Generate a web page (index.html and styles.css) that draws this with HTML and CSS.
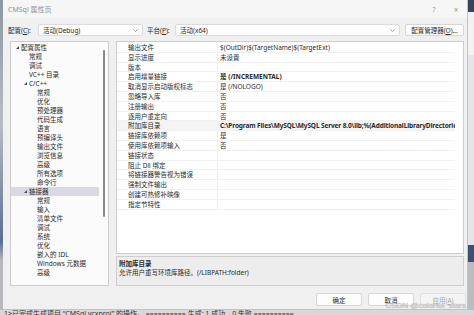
FILE: index.html
```html
<!DOCTYPE html>
<html>
<head>
  <meta charset="UTF-8" />
  <title>CMSql 属性页</title>
<link rel="stylesheet" href="styles.css">
</head>
<body>

<div class="screen">
  <div class="desk">
    <div class="edge-left"></div>

    <div class="dialog">
      <div class="titlebar">
        <span class="title">CMSql 属性页</span>
        <span class="ctl help">?</span>
        <span class="ctl close">×</span>
      </div>

      <div class="toolbar">
        <span class="label cfg-label">配置(<u>C</u>):</span>
        <div class="select cfg">
          <span>活动(Debug)</span>
          <svg class="chev" width="5" height="3" viewBox="0 0 5 3"><path d="M0.5 0.5 L2.5 2.5 L4.5 0.5" fill="none" stroke="#777" stroke-width="0.7"/></svg>
        </div>
        <span class="label plat-label">平台(<u>P</u>):</span>
        <div class="select plat">
          <span>活动(x64)</span>
          <svg class="chev" width="5" height="3" viewBox="0 0 5 3"><path d="M0.5 0.5 L2.5 2.5 L4.5 0.5" fill="none" stroke="#777" stroke-width="0.7"/></svg>
        </div>
        <button class="btn mgr">配置管理器(<u>O</u>)...</button>
      </div>

      <div class="main">
        <div class="tree">
          <ul class="tree-list">
            <li class="lv0 open"><span class="twisty"></span>配置属性</li>
            <li class="lv1"><span class="twisty"></span>常规</li>
            <li class="lv1"><span class="twisty"></span>调试</li>
            <li class="lv1"><span class="twisty"></span>VC++ 目录</li>
            <li class="lv1 open"><span class="twisty"></span>C/C++</li>
            <li class="lv2"><span class="twisty"></span>常规</li>
            <li class="lv2"><span class="twisty"></span>优化</li>
            <li class="lv2"><span class="twisty"></span>预处理器</li>
            <li class="lv2"><span class="twisty"></span>代码生成</li>
            <li class="lv2"><span class="twisty"></span>语言</li>
            <li class="lv2"><span class="twisty"></span>预编译头</li>
            <li class="lv2"><span class="twisty"></span>输出文件</li>
            <li class="lv2"><span class="twisty"></span>浏览信息</li>
            <li class="lv2"><span class="twisty"></span>高级</li>
            <li class="lv2"><span class="twisty"></span>所有选项</li>
            <li class="lv2"><span class="twisty"></span>命令行</li>
            <li class="lv1 open selected"><span class="twisty"></span>链接器</li>
            <li class="lv2"><span class="twisty"></span>常规</li>
            <li class="lv2"><span class="twisty"></span>输入</li>
            <li class="lv2"><span class="twisty"></span>清单文件</li>
            <li class="lv2"><span class="twisty"></span>调试</li>
            <li class="lv2"><span class="twisty"></span>系统</li>
            <li class="lv2"><span class="twisty"></span>优化</li>
            <li class="lv2"><span class="twisty"></span>嵌入的 IDL</li>
            <li class="lv2"><span class="twisty"></span>Windows 元数据</li>
            <li class="lv2"><span class="twisty"></span>高级</li>
          </ul>
          <div class="vscroll"><div class="thumb"></div></div>
        </div>

        <div class="right">
          <div class="grid">
            <div class="rows">
              <div class="row"><span class="name">输出文件</span><span class="value">$(OutDir)$(TargetName)$(TargetExt)</span></div>
              <div class="row"><span class="name">显示进度</span><span class="value">未设置</span></div>
              <div class="row"><span class="name">版本</span><span class="value"></span></div>
              <div class="row"><span class="name">启用增量链接</span><span class="value bold">是 (/INCREMENTAL)</span></div>
              <div class="row"><span class="name">取消显示启动版权标志</span><span class="value">是 (/NOLOGO)</span></div>
              <div class="row"><span class="name">忽略导入库</span><span class="value">否</span></div>
              <div class="row"><span class="name">注册输出</span><span class="value">否</span></div>
              <div class="row"><span class="name">逐用户重定向</span><span class="value">否</span></div>
              <div class="row current"><span class="name">附加库目录</span><span class="value bold tight">C:\Program Files\MySQL\MySQL Server 8.0\lib;%(AdditionalLibraryDirectories)</span></div>
              <div class="row"><span class="name">链接库依赖项</span><span class="value">是</span></div>
              <div class="row"><span class="name">使用库依赖项输入</span><span class="value">否</span></div>
              <div class="row"><span class="name">链接状态</span><span class="value"></span></div>
              <div class="row"><span class="name">阻止 Dll 绑定</span><span class="value"></span></div>
              <div class="row"><span class="name">将链接器警告视为错误</span><span class="value"></span></div>
              <div class="row"><span class="name">强制文件输出</span><span class="value"></span></div>
              <div class="row"><span class="name">创建可热修补映像</span><span class="value"></span></div>
              <div class="row"><span class="name">指定节特性</span><span class="value"></span></div>
            </div>
          </div>
          <div class="desc">
            <div class="desc-title">附加库目录</div>
            <div class="desc-text">允许用户重写环境库路径。(/LIBPATH:folder)</div>
          </div>
        </div>
      </div>

      <div class="footer">
        <button class="btn">确定</button>
        <button class="btn">取消</button>
        <button class="btn disabled">应用(<u>A</u>)</button>
      </div>

      <div class="watermark">CSDN @colorful_stars</div>
    </div>

    <div class="edge-right">
      <div class="er-top"></div>
      <div class="er-mid"></div>
      <div class="er-band"></div>
      <div class="er-low"></div>
    </div>
  </div>

  <div class="status">1>已完成生成项目 “CMSql.vcxproj” 的操作。 ========== 生成: 1 成功，0 失败 ==========</div>
</div>

</body>
</html>
```

FILE: styles.css
```css
* { box-sizing: border-box; }

body {
  margin: 0;
  width: 474px;
  height: 315px;
  overflow: hidden;
  background: #c9ccd1;
  font-family: "Noto Sans", "Noto Sans CJK SC", sans-serif;
  font-size: 6.5px;
  color: #2a2a2a;
}

u { text-decoration: underline; }

.screen {
  display: flex;
  flex-direction: column;
  height: 315px;
}

.desk {
  display: flex;
  height: 310px;
}

.edge-left {
  width: 3px;
  background: linear-gradient(#8d96a3, #b9bcc2 40%, #5b6f93 78%, #b6b8bc 84%);
}

.dialog {
  position: relative;
  width: 465px;
  background: #f0f0f0;
  border-right: 1px solid #c4c4c4;
  border-bottom: 1px solid #c4c4c4;
  display: flex;
  flex-direction: column;
}

/* title */
.titlebar {
  height: 18px;
  display: flex;
  align-items: center;
  padding-left: 5px;
  background: #f6f6f6;
  color: #929292;
  font-size: 7px;
}

.titlebar .title { flex: 1; }

.ctl {
  color: #9a9a9a;
  font-size: 7px;
  width: 22px;
  text-align: center;
}

.ctl.close { font-size: 8px; }

/* config row */
.toolbar {
  display: flex;
  align-items: center;
  height: 12px;
  margin-top: 6px;
}

.label { white-space: nowrap; }
.cfg-label { width: 35px; padding-left: 5px; }
.plat-label { width: 32px; padding-left: 4px; }

.select {
  height: 12px;
  background: #fdfdfd;
  border: 1px solid #dcdcdc;
  border-radius: 2px;
  display: flex;
  align-items: center;
  justify-content: space-between;
  padding: 0 4px;
}

.select.cfg { width: 105px; }
.select.plat { width: 225px; }

.btn {
  height: 13px;
  padding: 0;
  font-family: inherit;
  font-size: 6.5px;
  color: #2a2a2a;
  background: #fdfdfd;
  border: 1px solid #d6d6d6;
  border-radius: 2px;
}

.btn.mgr {
  width: 59px;
  height: 12px;
  margin-left: 5px;
}

/* main area */
.main {
  display: flex;
  height: 245px;
  margin-top: 5px;
  padding-left: 7px;
  gap: 7px;
}

.tree {
  width: 99px;
  background: #fbfbfb;
  border: 1px solid #cdcdcd;
  display: flex;
}

.tree-list {
  list-style: none;
  margin: 0;
  padding: 1px 0 0 0;
  flex: 1;
}

.tree-list li {
  height: 9px;
  line-height: 9px;
  display: flex;
  align-items: center;
  white-space: nowrap;
}

.tree-list li.lv0 { padding-left: 2px; }
.tree-list li.lv1 { padding-left: 10px; }
.tree-list li.lv2 { padding-left: 18px; }

.tree-list li.selected { background: #d9d9e4; }

.twisty {
  width: 8px;
  height: 9px;
  display: flex;
  align-items: center;
  justify-content: center;
}

.open > .twisty::before {
  content: "";
  width: 0;
  height: 0;
  border-left: 3px solid transparent;
  border-bottom: 3px solid #444;
}

.vscroll {
  width: 9px;
  display: flex;
  justify-content: center;
}

.vscroll .thumb {
  width: 2px;
  height: 167px;
  margin-top: 8px;
  background: #8a8a8a;
  border-radius: 1px;
}

.right {
  width: 348px;
  display: flex;
  flex-direction: column;
}

.grid {
  height: 213px;
  background: #ffffff;
  border: 1px solid #cdcdcd;
  padding: 1px 8px 0 0;
}

.row {
  display: flex;
  height: 9.8px;
  line-height: 9px;
  border-bottom: 1px solid #f1f1f1;
}

.row.current { background: #f4f4f4; }

.row .name {
  width: 100px;
  padding-left: 11px;
  white-space: nowrap;
  overflow: hidden;
}

.row .value {
  flex: 1;
  padding-left: 2px;
  border-left: 1px solid #eeeeee;
  white-space: nowrap;
  overflow: hidden;
}

.bold { font-weight: 700; }
.tight { letter-spacing: -0.12px; }

.desc {
  height: 30px;
  margin-top: 2px;
  background: #ededed;
  border: 1px solid #cdcdcd;
  padding: 2px 0 0 2px;
  line-height: 9px;
}

.desc-title { font-weight: 700; }

/* buttons */
.footer {
  display: flex;
  justify-content: flex-end;
  gap: 6px;
  margin-top: 7px;
  padding-right: 1px;
}

.footer .btn { width: 46px; }

.btn.disabled {
  color: #a8a8a8;
  background: #f4f4f4;
  border-color: #e2e2e2;
}

.watermark {
  position: absolute;
  right: 1px;
  bottom: -1px;
  font-family: "Liberation Sans", sans-serif;
  font-size: 8px;
  color: #d2d2d2;
  text-shadow: 0 0 1px #9a9a9a;
  pointer-events: none;
}

/* background window edges */
.edge-right {
  width: 6px;
  display: flex;
  flex-direction: column;
}

.er-top { height: 12px; background: #34435e; }
.er-mid { height: 233px; background: #e4e5e8; border-top: 43px solid #f2f2f2; }
.er-band { height: 17px; background: #3e4f74; }
.er-low { flex: 1; background: #b9bcc1; }

.status {
  height: 5px;
  overflow: hidden;
  background: #d8d8d8;
  color: #333;
  font-size: 7px;
  line-height: 7px;
  padding-left: 4px;
  white-space: nowrap;
}
```
